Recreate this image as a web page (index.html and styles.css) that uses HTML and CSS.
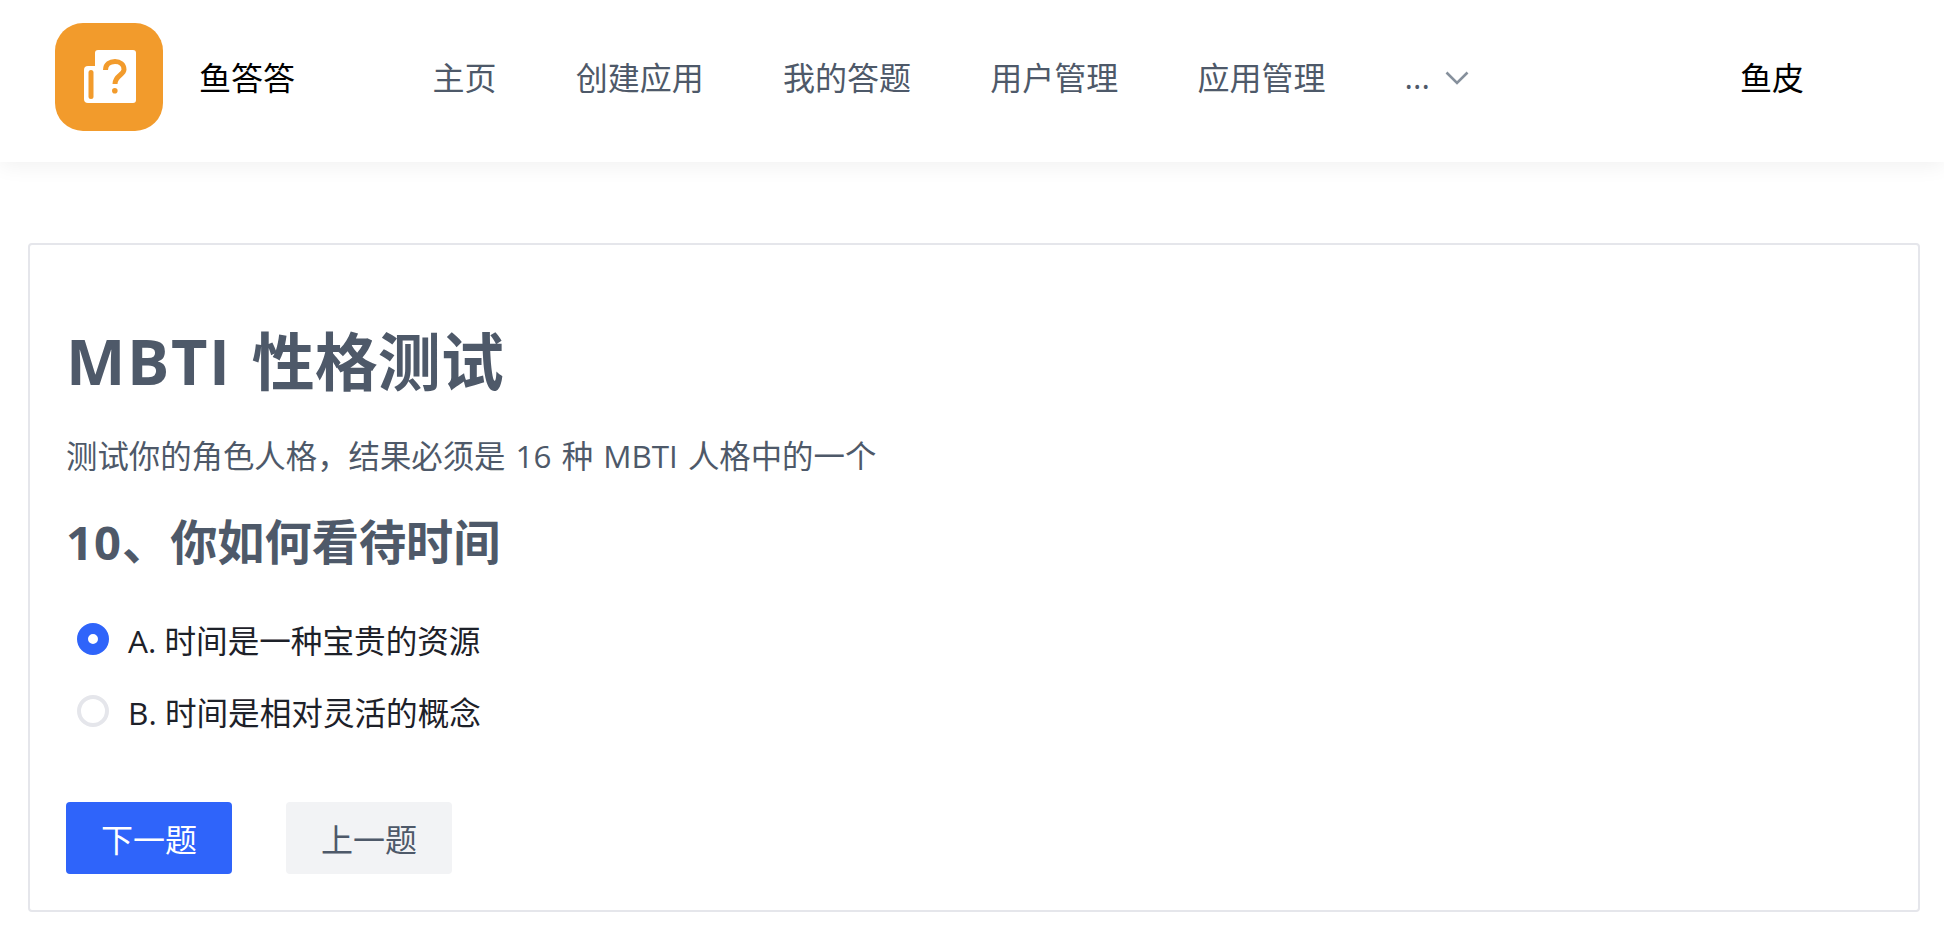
FILE: index.html
```html
<!DOCTYPE html>
<html lang="zh-CN">
<head>
    <meta charset="UTF-8">
    <meta name="viewport" content="width=device-width, initial-scale=1.0">
    <title>鱼答答</title>
    <link rel="stylesheet" href="styles.css">
</head>
<body>
    <header class="header">
        <div class="brand">
            <svg class="logo" viewBox="0 0 108 108" width="108" height="108">
                <rect width="108" height="108" rx="28" fill="#f29b2c"/>
                <rect x="29" y="43" width="20" height="37" rx="4" fill="#fff"/>
                <rect x="33.5" y="47" width="5" height="29" rx="2.5" fill="#f29b2c"/>
                <rect x="40" y="27" width="41" height="53" rx="3" fill="#fff"/>
                <path d="M50.5 47 C50.5 41 55 38.5 60 38.5 C65 38.5 69 41.5 69 46.5 C69 52 60 52.5 60 61" fill="none" stroke="#f29b2c" stroke-width="5"/>
                <circle cx="59.8" cy="67.8" r="2.8" fill="#f29b2c"/>
            </svg>
            <span class="brand-name">鱼答答</span>
        </div>
        <nav class="nav">
            <a class="nav-item">主页</a>
            <a class="nav-item">创建应用</a>
            <a class="nav-item">我的答题</a>
            <a class="nav-item">用户管理</a>
            <a class="nav-item">应用管理</a>
            <a class="nav-item nav-more">
                <span>...</span>
                <svg class="chevron" viewBox="0 0 24 14" width="24" height="14">
                    <path d="M1.5 1.5 L12 12 L22.5 1.5" fill="none" stroke="#86909c" stroke-width="2.6"/>
                </svg>
            </a>
        </nav>
        <div class="user">鱼皮</div>
    </header>

    <main class="card">
        <h1 class="title"><span class="title-latin">MBTI</span> 性格测试</h1>
        <p class="desc">测试你的角色人格，结果必须是 16 种 MBTI 人格中的一个</p>
        <h2 class="question"><span class="question-no">10、</span>你如何看待时间</h2>
        <div class="options">
            <label class="option">
                <span class="radio radio-checked"></span>
                <span>A. 时间是一种宝贵的资源</span>
            </label>
            <label class="option">
                <span class="radio"></span>
                <span>B. 时间是相对灵活的概念</span>
            </label>
        </div>
        <div class="actions">
            <button class="btn btn-primary">下一题</button>
            <button class="btn btn-secondary">上一题</button>
        </div>
    </main>
</body>
</html>
```

FILE: styles.css
```css
* {
    box-sizing: border-box;
}
body {
    margin: 0;
    font-family: "Open Sans", "Noto Sans CJK SC", sans-serif;
    font-size: 32px;
    background-color: #fff;
    color: #1d2129;
}
.header {
    height: 162px;
    padding: 0 0 8px 55px;
    display: flex;
    align-items: center;
    background: #fff;
    box-shadow: 0 4px 20px rgba(0, 0, 0, 0.06);
}
.brand {
    width: 338px;
    display: flex;
    align-items: center;
    gap: 36px;
    padding-bottom: 0;
    color: #000;
}
.brand-name {
    margin-bottom: 2px;
}
.logo {
    display: block;
}
.nav {
    display: flex;
    align-items: center;
    width: 1347px;
    padding-bottom: 2px;
    color: #4e5969;
}
.nav-item {
    padding: 0 39.6px;
    white-space: nowrap;
}
.nav-more {
    display: flex;
    align-items: center;
    gap: 15px;
}
.chevron {
    margin-top: 3px;
}
.user {
    margin-bottom: 2px;
    color: #000;
}
.card {
    margin: 81px 24px 0 28px;
    height: 669px;
    padding: 72px 36px 0;
    border: 2px solid #e5e6eb;
    border-radius: 4px;
    background: #fff;
}
.title {
    margin: 0;
    font-size: 63px;
    line-height: 88px;
    font-weight: 700;
    color: #4e5969;
}
.title-latin {
    letter-spacing: 1.6px;
    margin-right: 4px;
}
.desc {
    margin: 27px 0 0;
    font-size: 31.4px;
    word-spacing: 2px;
    line-height: 48px;
    color: #4e5969;
}
.question {
    margin: 29px 0 0;
    font-size: 47.2px;
    line-height: 66px;
    font-weight: 700;
    color: #4e5969;
}
.question-no {
    letter-spacing: 1px;
}
.options {
    margin-top: 28px;
    display: flex;
    flex-direction: column;
    padding-left: 11px;
    font-size: 31.6px;
}
.option {
    height: 72px;
    display: flex;
    align-items: center;
    gap: 19px;
}
.radio {
    width: 32px;
    height: 32px;
    border-radius: 50%;
    border: 4px solid #e5e6eb;
}
.radio-checked {
    border: 11px solid #2f64fa;
    background: #fff;
}
.actions {
    margin-top: 55px;
    display: flex;
    gap: 54px;
}
.btn {
    width: 166px;
    height: 72px;
    padding: 0;
    border: none;
    border-radius: 4px;
    font-family: inherit;
    font-size: 32px;
}
.btn-primary {
    background: #2f64fa;
    color: #fff;
}
.btn-secondary {
    background: #f2f3f5;
    color: #4e5969;
}
```
